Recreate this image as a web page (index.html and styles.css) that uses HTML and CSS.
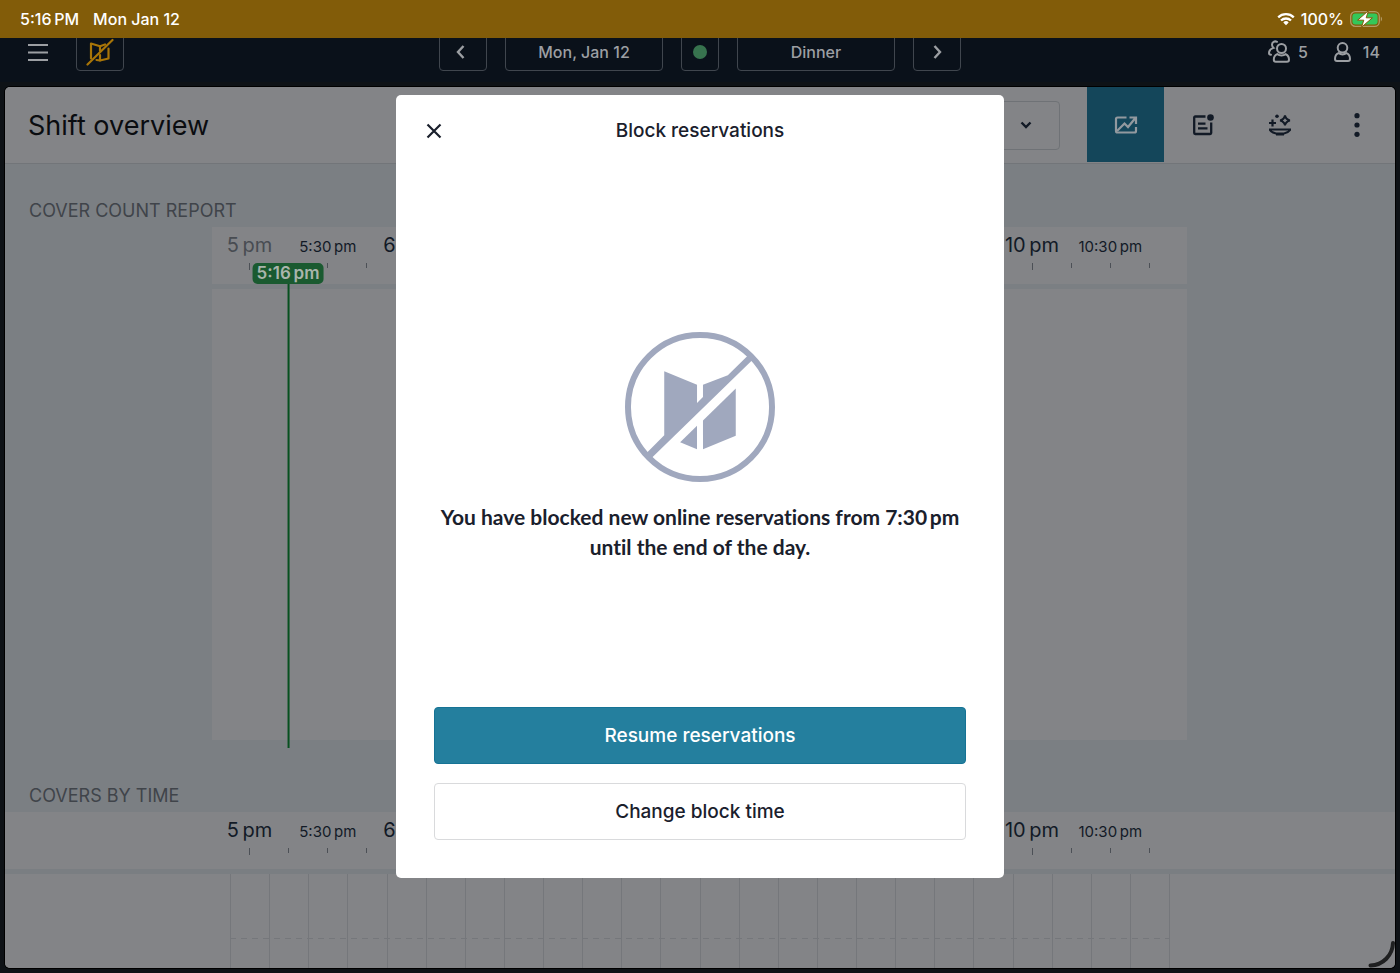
FILE: index.html
```
<!DOCTYPE html>
<html lang="en">
<head>
    <meta charset="UTF-8">
    <meta name="viewport" content="width=device-width, initial-scale=1.0">
    <title>Shift overview</title>
    <link rel="stylesheet" href="styles.css">
</head>
<body>
    <!-- Device status bar -->
    <div class="status-bar">
        <div class="status-group">
            <span>5:16&thinsp;PM</span>
            <span>Mon Jan 12</span>
        </div>
        <div class="status-icons">
            <svg width="18" height="14" viewBox="0 0 18 14" fill="none" stroke="#fff" stroke-width="2.3">
                <path d="M1.2 5.3a11.2 11.2 0 0 1 15.6 0"/>
                <path d="M4 8.5a7.2 7.2 0 0 1 10 0"/>
                <path d="M9 13.2l-2.7-2.8a3.9 3.9 0 0 1 5.4 0z" fill="#fff" stroke="none"/>
            </svg>
            <span>100%</span>
            <svg width="33" height="18" viewBox="0 0 33 18">
                <rect x="0.7" y="1.7" width="28.6" height="14.6" rx="4.6" fill="none" stroke="#b39a66" stroke-width="1.3"/>
                <path d="M30.8 6.6v4.8c1.6-.7 1.6-4.1 0-4.8z" fill="#b39a66"/>
                <rect x="2.4" y="3.4" width="25.2" height="11.2" rx="3" fill="#34c759"/>
                <path d="M18.5.6L7.6 10.200h6.200l-2.300 7L22.400 7.800h-6.200z" fill="#fff" stroke="#825c09" stroke-width="1"/>
            </svg>
        </div>
    </div>

    <!-- App bar -->
    <header class="app-bar">
        <div class="app-left">
            <button class="menu-btn" aria-label="Menu">
                <svg width="20" height="18" viewBox="0 0 20 18" stroke="#9c9fa3" stroke-width="2.2"><path d="M0 2h20M0 9.500h20M0 17h20"/></svg>
            </button>
            <button class="bar-btn bar-btn-sm" aria-label="Block reservations">
                <svg width="28" height="28" viewBox="0 0 28 28" fill="none" stroke="#a87508" stroke-width="2.2" stroke-linecap="round" stroke-linejoin="round">
                    <path d="M5 20.500V5.500l9 2.700 5-1.700"/>
                    <path d="M14 8.200v4.500M14 17v5.500"/>
                    <path d="M10.500 22l3.500.500 8.500-2V10.500"/>
                    <path d="M1.500 26.500L26.500 2"/>
                </svg>
            </button>
        </div>
        <div class="app-nav">
            <button class="bar-btn bar-btn-sm" aria-label="Previous day">
                <svg class="chevron-prev" width="10" height="14" viewBox="0 0 10 14" fill="none" stroke="#9c9fa3" stroke-width="2.4"><path d="M7.500 1L2 7l5.500 6"/></svg>
            </button>
            <button class="bar-btn bar-btn-lg">Mon, Jan 12</button>
            <button class="bar-btn bar-btn-dot" aria-label="Shift status"><span class="dot"></span></button>
            <button class="bar-btn bar-btn-lg">Dinner</button>
            <button class="bar-btn bar-btn-sm" aria-label="Next day">
                <svg width="10" height="14" viewBox="0 0 10 14" fill="none" stroke="#9c9fa3" stroke-width="2.4"><path d="M2.500 1L8 7l-5.500 6"/></svg>
            </button>
        </div>
        <div class="app-counts">
            <div class="count">
                <svg width="22" height="24" viewBox="0 0 22 24" fill="none" stroke="#9c9fa3" stroke-width="2" stroke-linecap="round">
                    <circle cx="13.500" cy="8.500" r="4.500"/>
                    <path d="M9.200 14.200c-2.400 1-3.400 3.200-3.400 5.600 0 1.300.8 2 2 2h11.200c1.300 0 2-.7 2-2 0-2.400-1-4.700-3.200-5.600-2.400 1.600-6.200 1.600-8.600 0z"/>
                    <path d="M9 1.800C6.500.6 4 2.200 4 4.800c0 1.500.8 2.300 1.600 3.100C2.800 8.700 1 10.800 1 13c0 1 .7 1.700 2 1.700"/>
                </svg>
                <span>5</span>
            </div>
            <div class="count count-seats">
                <svg width="17" height="20" viewBox="0 0 17 20" fill="none" stroke="#9c9fa3" stroke-width="2">
                    <circle cx="8.500" cy="5.800" r="4.800"/>
                    <path d="M4.500 11.200C2.200 12.200 1 14.600 1 17c0 1.300.7 2 2 2h11c1.300 0 2-.7 2-2 0-2.400-1.200-4.800-3.500-5.800-2.400 1.500-5.600 1.500-8 0z"/>
                </svg>
                <span>14</span>
            </div>
        </div>
    </header>

    <main class="panel">
        <div class="panel-header">
            <h1>Shift overview</h1>
            <div class="select-wrap">
                <select class="shift-select" aria-label="Shift area">
                    <option>All</option>
                </select>
                <svg class="select-arrow" width="12" height="8" viewBox="0 0 12 8" fill="none" stroke="#121a26" stroke-width="2.400"><path d="M1.500 1.500L6 6l4.500-4.500"/></svg>
            </div>
            <nav class="tabs">
                <button class="tab tab-active" aria-label="Overview">
                    <svg width="24" height="20" viewBox="0 0 24 20" fill="none" stroke="#92999f" stroke-width="2.200">
                        <path d="M12.500 2.500H3.500a1.500 1.500 0 0 0-1.500 1.500v12a1.500 1.500 0 0 0 1.500 1.500h17a1.500 1.500 0 0 0 1.500-1.500V12"/>
                        <path d="M3 16l7.500-7.500 3.500 3.500L21 3.500M15.500 2.500H22V9"/>
                    </svg>
                </button>
                <button class="tab" aria-label="Notes">
                    <svg width="22" height="22" viewBox="0 0 22 22" fill="none" stroke="#121a26" stroke-width="2.300">
                        <path d="M13.500 2.500H3.200a1 1 0 0 0-1 1V19a1 1 0 0 0 1 1h15a1 1 0 0 0 1-1V8.500"/>
                        <path d="M6 9.700h7.500M6 14.300h9.500"/>
                        <circle cx="18.500" cy="3.500" r="3.300" fill="#121a26" stroke="none"/>
                    </svg>
                </button>
                <button class="tab" aria-label="Specials">
                    <svg width="22" height="22" viewBox="0 0 22 22" fill="none" stroke="#121a26" stroke-width="2">
                        <path d="M.500 15.500h21c-1.500 2.300-3.700 3.600-6.500 4H7c-2.800-.4-5-1.700-6.500-4z"/>
                        <path d="M7 19h8v2.500H7z" fill="#121a26" stroke="none"/>
                        <path d="M3.500 5.500v7M0 9h7" stroke-width="2.200"/>
                        <circle cx="8" cy="2.200" r="1.800" fill="#121a26" stroke="none"/>
                        <path d="M16 1.500c.7 3.200 1.700 4.200 4.900 4.900-3.200.7-4.200 1.700-4.900 4.900-.7-3.200-1.700-4.200-4.900-4.900 3.200-.7 4.200-1.700 4.900-4.900z"/>
                    </svg>
                </button>
                <button class="tab" aria-label="More">
                    <svg width="6" height="24" viewBox="0 0 6 24" fill="#121a26"><circle cx="3" cy="2.700" r="2.600"/><circle cx="3" cy="12" r="2.600"/><circle cx="3" cy="21.300" r="2.600"/></svg>
                </button>
            </nav>
        </div>

        <!-- Cover count report -->
        <section class="report">
            <h2>COVER COUNT REPORT</h2>
            <div class="chart">
                <div class="axis axis-started" data-axis></div>
                <div class="chart-body"></div>
                <div class="now" style="left: 7.8%">
                    <span class="now-label">5:16&thinsp;pm</span>
                    <span class="now-line"></span>
                </div>
            </div>
        </section>

        <!-- Covers by time -->
        <section class="covers">
            <h2>COVERS BY TIME</h2>
            <div class="covers-head">
                <div class="axis" data-axis></div>
            </div>
            <div class="covers-body">
                <div class="covers-grid" id="covers-grid"></div>
            </div>
        </section>

        <svg class="grip" width="28" height="28" viewBox="0 0 28 28" fill="none" stroke="#1f2021" stroke-width="4" stroke-linecap="round"><path d="M3.500 25.500C16 25 25.500 15.500 26 3"/></svg>
    </main>

    <!-- Block reservations dialog -->
    <div class="overlay">
        <div class="modal" role="dialog" aria-labelledby="modal-title">
            <div class="modal-header">
                <button class="close-btn" aria-label="Close">
                    <svg width="16" height="16" viewBox="0 0 16 16" stroke="#1a202c" stroke-width="2.200"><path d="M1.500 1.500l13 13M14.500 1.500l-13 13"/></svg>
                </button>
                <h2 id="modal-title">Block reservations</h2>
            </div>
            <div class="modal-content">
                <svg width="150" height="150" viewBox="0 0 151 151" fill="#a0a8be">
                    <circle cx="75.500" cy="75.500" r="72.500" fill="none" stroke="#a0a8be" stroke-width="6"/>
                    <path d="M39.500 39.500L72.500 53v18.500L78.500 65.500V53L103.500 43.500L124.500 23l4.500 4.500L26 127.500l-5-5L39.500 104z"/>
                    <path d="M111.500 57v47.500L78.500 118V89z"/>
                    <path d="M72.500 94.500V118L55.500 111z"/>
                </svg>
                <p>You have blocked new online reservations from 7:30&thinsp;pm until the end of the day.</p>
            </div>
            <div class="modal-actions">
                <button class="btn btn-primary">Resume reservations</button>
                <button class="btn btn-outline">Change block time</button>
            </div>
        </div>
    </div>

    <script src="script.js"></script>
</body>
</html>
```
FILE: script.js
```
const START_HOUR = 5;
const SLOTS = 24;

// One cell per quarter hour, a label on every half hour
document.querySelectorAll("[data-axis]").forEach((axis) => {
    for (let i = 0; i < SLOTS; i++) {
        const slot = document.createElement("div");
        slot.className = "slot";
        const hour = START_HOUR + Math.floor(i / 4);
        if (i % 4 === 0) {
            slot.classList.add("slot-hour");
            slot.textContent = hour + "\u2009pm";
        } else if (i % 4 === 2) {
            slot.textContent = hour + ":30\u2009pm";
        }
        axis.appendChild(slot);
    }
});

const grid = document.getElementById("covers-grid");
for (let i = 0; i < SLOTS; i++) {
    grid.appendChild(document.createElement("span"));
}
```
FILE: styles.css
```
* {
    margin: 0;
    padding: 0;
    box-sizing: border-box;
}

body {
    display: flex;
    flex-direction: column;
    min-height: 100vh;
    background-color: #0e1216;
    color: #121a26;
    font-family: Inter, "Liberation Sans", sans-serif;
    font-size: 16px;
}

button {
    border: none;
    background: none;
    color: inherit;
    font: inherit;
    cursor: pointer;
}

svg {
    display: block;
    flex-shrink: 0;
}

.status-bar {
    display: flex;
    align-items: center;
    justify-content: space-between;
    height: 38px;
    padding: 0 17px 0 20px;
    background-color: #825c09;
    color: #fff;
    font-weight: 500;
}

.status-group {
    display: flex;
    gap: 14px;
}

.status-icons {
    display: flex;
    align-items: center;
    gap: 6px;
}

.app-bar {
    display: grid;
    grid-template-columns: 1fr auto 1fr;
    align-items: start;
    height: 44px;
    padding: 0 20px;
    background-color: #0a111a;
    color: #9c9fa3;
    overflow: hidden;
}

.app-left,
.app-nav,
.app-counts {
    display: flex;
    align-items: center;
    height: 38px;
    margin-top: -5px;
}

.app-left {
    gap: 28px;
    padding-left: 8px;
}

.app-nav {
    gap: 18px;
}

.app-counts {
    justify-content: flex-end;
    gap: 26px;
}

.bar-btn {
    display: flex;
    align-items: center;
    justify-content: center;
    height: 38px;
    border: 1px solid #40464e;
    border-radius: 4px;
    font-weight: 500;
}

.bar-btn-sm {
    width: 48px;
}

.bar-btn-lg {
    width: 158px;
}

.bar-btn-dot {
    width: 38px;
}

.chevron-prev {
    margin-right: 4px;
}

.dot {
    width: 14px;
    height: 14px;
    border-radius: 50%;
    background-color: #37734e;
}

.count {
    display: flex;
    align-items: center;
    gap: 8px;
    font-weight: 500;
}

.count-seats {
    gap: 12px;
}

.panel {
    position: relative;
    display: flex;
    flex: 1;
    flex-direction: column;
    margin: 5px 5px;
    background-color: #7b7f83;
    border-radius: 5px;
    box-shadow: 0 0 0 1px #000;
    overflow: hidden;
}

.panel-header {
    display: flex;
    align-items: center;
    height: 77px;
    padding-left: 23px;
    background-color: #838487;
    border-bottom: 1px solid #727579;
}

.panel-header h1 {
    color: #0a0c10;
    font-size: 27px;
    font-weight: 400;
}

.select-wrap {
    display: flex;
    align-items: center;
    position: relative;
    width: 220px;
    margin-left: auto;
}

.shift-select {
    width: 100%;
    height: 49px;
    padding: 0 16px;
    appearance: none;
    background: none;
    border: 1px solid #6f7276;
    border-radius: 4px;
    color: inherit;
    font: inherit;
}

.select-arrow {
    position: absolute;
    right: 28px;
    pointer-events: none;
}

.tabs {
    display: flex;
    align-self: flex-start;
    margin-left: 27px;
}

.tab {
    display: flex;
    align-items: center;
    justify-content: center;
    width: 77px;
    height: 75px;
}

.tab-active {
    background-color: #14465a;
}

.report h2,
.covers h2 {
    padding-left: 24px;
    color: #40444a;
    font-size: 18px;
    font-weight: 400;
    line-height: 32px;
}

.report {
    padding-top: 31px;
}

.chart {
    position: relative;
    margin: 0 208px 0 207px;
}

.axis {
    display: grid;
    grid-template-columns: repeat(24, minmax(0, 1fr));
    height: 57px;
    padding: 0 18px;
    background-color: #838487;
}

.slot {
    display: flex;
    position: relative;
    justify-content: center;
    font-size: 15px;
    line-height: 40px;
    white-space: nowrap;
}

.slot::after {
    content: "";
    position: absolute;
    top: 36px;
    width: 1px;
    height: 5px;
    background-color: #4c5056;
}

.slot-hour {
    font-size: 20px;
    line-height: 36px;
}

.slot-hour::after {
    height: 7px;
}

.axis-started .slot:first-child {
    color: #484c52;
}

.chart-body {
    height: 451px;
    margin-top: 5px;
    background-color: #838487;
}

.now {
    display: flex;
    position: absolute;
    top: 36px;
    bottom: -8px;
    flex-direction: column;
    align-items: center;
    transform: translateX(-50%);
}

.now-label {
    padding: 0 4px;
    background-color: #1a5a30;
    border-radius: 5px;
    color: #a9b5ac;
    font-size: 17px;
    font-weight: 600;
    line-height: 21px;
}

.now-line {
    flex: 1;
    width: 2px;
    background-color: #07501f;
}

.covers {
    display: flex;
    flex: 1;
    flex-direction: column;
    padding-top: 40px;
}

.covers-head {
    padding: 0 208px 0 207px;
    background-color: #838487;
    border-bottom: 5px solid #7a7e82;
}

.covers-body {
    display: flex;
    flex: 1;
    min-height: 94px;
    padding: 0 225px;
    background-color: #838487;
}

.covers-grid {
    display: grid;
    flex: 1;
    grid-template-columns: repeat(24, 1fr);
    border-right: 1px solid #75777b;
    background-image: repeating-linear-gradient(90deg, #75777b 0 6px, transparent 6px 11px);
    background-position: 0 64px;
    background-repeat: no-repeat;
    background-size: 100% 1px;
}

.covers-grid span {
    border-left: 1px solid #75777b;
}

.grip {
    position: absolute;
    right: 0;
    bottom: 0;
}

.overlay {
    display: flex;
    position: fixed;
    inset: 0;
    align-items: center;
    justify-content: center;
}

.modal {
    display: flex;
    flex-direction: column;
    width: 608px;
    max-width: 100%;
    height: calc(100vh - 190px);
    padding: 0 38px 38px;
    background-color: #fff;
    border-radius: 5px;
    color: #1a202c;
}

.modal-header {
    display: grid;
    grid-template-columns: 1fr auto 1fr;
    align-items: center;
    height: 71px;
}

.close-btn {
    width: 32px;
    height: 32px;
    padding: 8px;
    margin-left: -16px;
}

.modal-header h2 {
    font-size: 19px;
    font-weight: 500;
}

.modal-content {
    display: flex;
    flex: 1;
    flex-direction: column;
    align-items: center;
    justify-content: center;
    gap: 20px;
    padding-top: 20px;
}

.modal-content p {
    font-family: Lato, "Liberation Sans", sans-serif;
    font-size: 21px;
    font-variant-ligatures: none;
    font-weight: 700;
    line-height: 30px;
    text-align: center;
}

.modal-actions {
    display: flex;
    flex-direction: column;
    gap: 19px;
}

.btn {
    height: 57px;
    border: 1px solid #d9dadc;
    border-radius: 4px;
    font-size: 19px;
    font-weight: 500;
}

.btn-primary {
    background-color: #247f9e;
    border-color: #167395;
    color: #fff;
}
```
